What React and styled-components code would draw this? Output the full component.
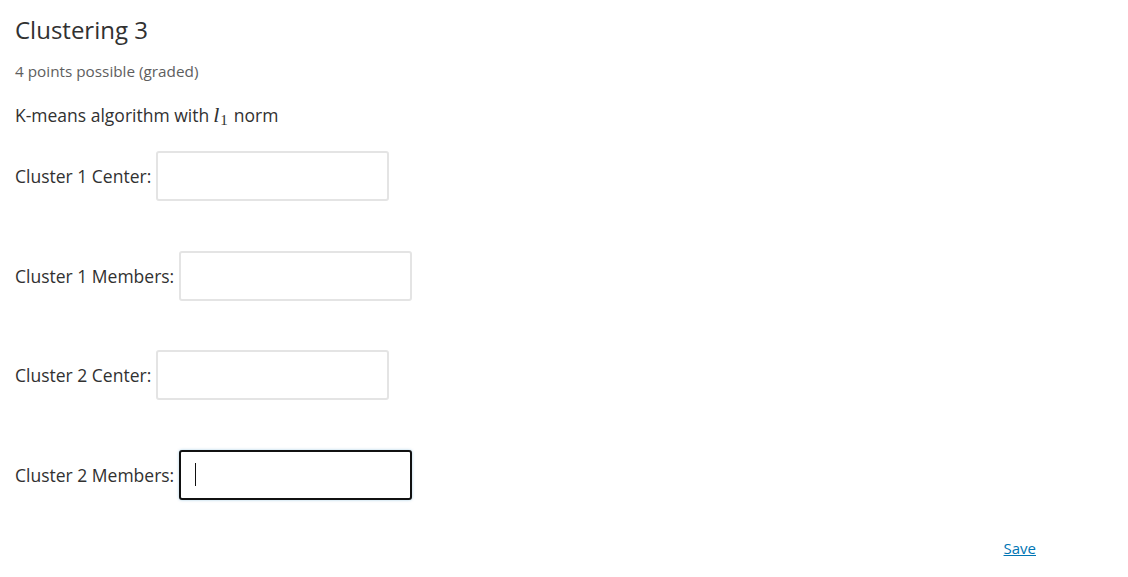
import React from "react";
import styled, { createGlobalStyle } from "styled-components";

const GlobalStyle = createGlobalStyle`
  html, body {
    margin: 0;
    padding: 0;
    background: #ffffff;
  }
  body {
    font-family: "Open Sans", "Noto Sans", sans-serif;
    color: #313131;
  }
`;

const Page = styled.div`
  width: 1128px;
  height: 577px;
  box-sizing: border-box;
  padding: 14px 92px 0 15px;
  display: flex;
  flex-direction: column;
`;

const Title = styled.h3`
  margin: 0;
  font-size: 24px;
  font-weight: 400;
  line-height: 32px;
  color: #313131;
`;

const Points = styled.div`
  margin-top: 15px;
  font-size: 15.3px;
  line-height: 20px;
  color: #5e5e5e;
`;

const Prompt = styled.p`
  margin: 21px 0 0;
  font-size: 17.5px;
  line-height: 26px;
  color: #313131;
`;

const MathVar = styled.span`
  font-family: "Liberation Serif", "DejaVu Serif", serif;
  font-style: italic;
  font-size: 22px;
  margin: 0 6px 0 4px;
  sub {
    font-style: normal;
    font-size: 15px;
    vertical-align: -3px;
    margin-left: 1px;
  }
`;

const Fields = styled.div`
  margin-top: 18px;
  display: flex;
  flex-direction: column;
  gap: 49.5px;
`;

const Row = styled.label`
  display: flex;
  align-items: center;
  gap: 5px;
  font-size: 17.5px;
  color: #313131;
`;

const InputWrap = styled.span`
  position: relative;
  display: inline-flex;
`;

const Input = styled.input`
  width: 233px;
  height: 50px;
  box-sizing: border-box;
  border: 2px solid ${(p) => (p.$active ? "#111111" : "#e4e4e4")};
  border-radius: 3px;
  background: #fff;
  padding: 0 14px;
  font-family: inherit;
  font-size: 16px;
  outline: none;
  box-shadow: ${(p) => (p.$active ? "0 0 3px rgba(0, 117, 180, 0.35)" : "none")};
`;

const Caret = styled.span`
  position: absolute;
  left: 16px;
  top: 13px;
  width: 1px;
  height: 23px;
  background: #111;
`;

const Footer = styled.div`
  margin-top: 38px;
  display: flex;
  justify-content: flex-end;
`;

const SaveLink = styled.a`
  font-size: 15px;
  line-height: 20px;
  color: #0075b4;
  text-decoration: underline;
  cursor: pointer;
`;

const fields = [
  { label: "Cluster 1 Center:" },
  { label: "Cluster 1 Members:" },
  { label: "Cluster 2 Center:" },
  { label: "Cluster 2 Members:", active: true },
];

export default function App() {
  return (
    <>
      <GlobalStyle />
      <Page>
        <Title>Clustering 3</Title>
        <Points>4 points possible (graded)</Points>
        <Prompt>
          K-means algorithm with
          <MathVar>
            l<sub>1</sub>
          </MathVar>
          norm
        </Prompt>
        <Fields>
          {fields.map((f) => (
            <Row key={f.label}>
              {f.label}
              <InputWrap>
                <Input type="text" $active={f.active} />
                {f.active && <Caret />}
              </InputWrap>
            </Row>
          ))}
        </Fields>
        <Footer>
          <SaveLink>Save</SaveLink>
        </Footer>
      </Page>
    </>
  );
}
